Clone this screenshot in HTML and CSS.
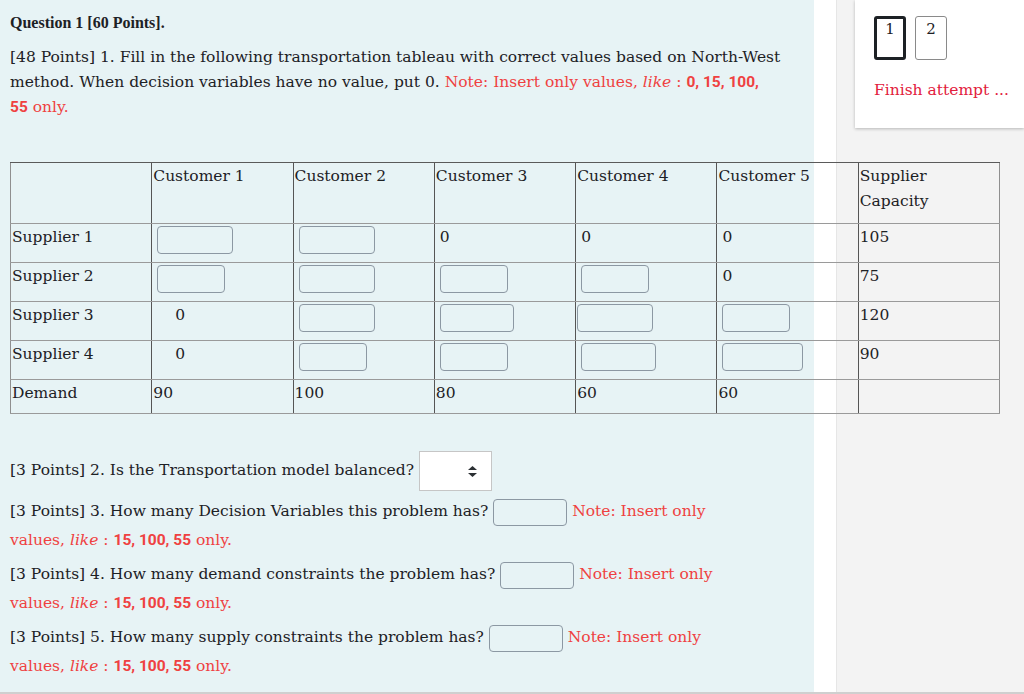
FILE: index.html
```html
<!DOCTYPE html>
<html lang="en">
<head>
    <meta charset="UTF-8">
    <title>Question 1</title>
    <link rel="stylesheet" href="styles.css">
</head>
<body>

    <div class="page">
        <div class="main">
            <h4 class="qtitle">Question 1 [60 Points].</h4>
            <p class="intro">[48 Points] 1. Fill in the following transportation tableau with correct values based on North-West method. When decision variables have no value, put 0. <span class="note">Note: Insert only values, <i>like</i> : <b>0, 15, 100,</b> <span class="nowrap"><b>55</b> only.</span></span></p>

            <table class="tableau">
                <tr>
                    <th></th>
                    <th>Customer 1</th>
                    <th>Customer 2</th>
                    <th>Customer 3</th>
                    <th>Customer 4</th>
                    <th>Customer 5</th>
                    <th>Supplier<br>Capacity</th>
                </tr>
                <tr>
                    <td>Supplier 1</td>
                    <td><input class="cell w76"></td>
                    <td><input class="cell w76"></td>
                    <td><span class="zero">0</span></td>
                    <td><span class="zero">0</span></td>
                    <td><span class="zero">0</span></td>
                    <td>105</td>
                </tr>
                <tr>
                    <td>Supplier 2</td>
                    <td><input class="cell"></td>
                    <td><input class="cell w76"></td>
                    <td><input class="cell"></td>
                    <td><input class="cell"></td>
                    <td><span class="zero">0</span></td>
                    <td>75</td>
                </tr>
                <tr>
                    <td>Supplier 3</td>
                    <td><span class="zero far">0</span></td>
                    <td><input class="cell w76"></td>
                    <td><input class="cell w74"></td>
                    <td><input class="cell w76 tight"></td>
                    <td><input class="cell"></td>
                    <td>120</td>
                </tr>
                <tr>
                    <td>Supplier 4</td>
                    <td><span class="zero far">0</span></td>
                    <td><input class="cell"></td>
                    <td><input class="cell"></td>
                    <td><input class="cell w75"></td>
                    <td><input class="cell w81"></td>
                    <td>90</td>
                </tr>
                <tr class="demand">
                    <td>Demand</td>
                    <td>90</td>
                    <td>100</td>
                    <td>80</td>
                    <td>60</td>
                    <td>60</td>
                    <td></td>
                </tr>
            </table>

            <p class="q q-select">[3 Points] 2. Is the Transportation model balanced?
                <span class="select">
                    <svg width="9" height="11" viewBox="0 0 9 11"><path d="M4.5 0 L9 4 L0 4 Z M4.5 11 L9 7 L0 7 Z" fill="#2b2f33"/></svg>
                </span>
            </p>
            <p class="q">[3 Points] 3. How many Decision Variables this problem has? <input class="answer"> <span class="note">Note: Insert only<br>values, <i>like</i> : <b>15, 100, 55</b> only.</span></p>
            <p class="q">[3 Points] 4. How many demand constraints the problem has? <input class="answer"> <span class="note">Note: Insert only<br>values, <i>like</i> : <b>15, 100, 55</b> only.</span></p>
            <p class="q">[3 Points] 5. How many supply constraints the problem has? <input class="answer"> <span class="note">Note: Insert only<br>values, <i>like</i> : <b>15, 100, 55</b> only.</span></p>
        </div>

        <div class="spacer"></div>

        <div class="aside">
            <div class="card">
                <div class="nav">
                    <span class="navbtn current">1</span>
                    <span class="navbtn">2</span>
                </div>
                <a class="finish" href="#">Finish attempt ...</a>
            </div>
        </div>
    </div>

</body>
</html>
```

FILE: styles.css
```css
body {
    margin: 0;
    font-family: "DejaVu Serif", "Liberation Serif", serif;
    font-size: 15.5px;
    color: #1d2125;
    background: #fff;
}
.page {
    display: flex;
    height: 692px;
    border-bottom: 2px solid #cfcfcf;
}
.main {
    width: 814px;
    box-sizing: border-box;
    padding: 10px 14px 0 10px;
    background: #e7f3f5;
    position: relative;
    z-index: 1;
    line-height: 25px;
}
.spacer {
    width: 22px;
    background: #fff;
}
.aside {
    flex: 1;
    background: #f3f3f3;
    border-left: 1px solid #e6e6e6;
}
.card {
    margin-left: 18px;
    height: 128px;
    box-sizing: border-box;
    padding: 16px 0 0 19px;
    background: #fff;
    box-shadow: 0 1px 3px rgba(0, 0, 0, 0.25);
}
.nav {
    display: flex;
    gap: 9px;
}
.navbtn {
    width: 32px;
    height: 44px;
    box-sizing: border-box;
    border: 1px solid #8a8a8a;
    border-radius: 3px;
    text-align: center;
    font-size: 15px;
    line-height: 22px;
    padding-top: 1px;
}
.navbtn.current {
    border: 3px solid #1d2125;
    padding-top: 0;
    line-height: 20px;
}
.finish {
    display: block;
    margin-top: 20px;
    color: #e2203c;
    text-decoration: none;
    font-size: 15.5px;
    line-height: 20px;
}
.qtitle {
    margin: 0;
    font-family: "Liberation Serif", serif;
    font-size: 16px;
    font-weight: bold;
}
.intro {
    margin: 10px 0 0;
}
.note {
    color: #ef4141;
}
.note b {
    font-family: Roboto, "Liberation Sans", sans-serif;
    font-weight: bold;
}
.nowrap {
    white-space: nowrap;
}
.tableau {
    width: 990px;
    margin-top: 42px;
    table-layout: fixed;
    border-collapse: collapse;
    border: 1px solid #8f8f8f;
}
.tableau th,
.tableau td {
    text-align: left;
    vertical-align: top;
    font-weight: normal;
    border-left: 1px solid #555;
    border-top: 1px solid #5a5a5a;
    border-bottom: 1px solid #9a9a9a;
    padding: 1px 1px 7px;
    line-height: 25px;
}
.tableau th {
    padding-bottom: 9px;
}
.tableau tr > :first-child {
    border-left: 1px solid #8f8f8f;
}
.demand td {
    padding-bottom: 7px;
}
.zero {
    padding-left: 4px;
}
.zero.far {
    padding-left: 22px;
}
input.cell {
    display: block;
    width: 68px;
    height: 28px;
    box-sizing: border-box;
    margin: 1px 0 1px 4px;
    border: 1px solid #8c98a3;
    border-radius: 4px;
    background: transparent;
}
input.w74 { width: 74px; }
input.w75 { width: 75px; }
input.w76 { width: 76px; }
input.w81 { width: 81px; }
input.tight { margin-left: 0; }
.q {
    margin: 0 0 5px;
    line-height: 29px;
}
.q-select {
    margin-top: 36px;
    margin-bottom: 6px;
    line-height: 40px;
}
.select {
    display: inline-flex;
    align-items: center;
    justify-content: flex-end;
    width: 73px;
    height: 40px;
    box-sizing: border-box;
    padding-right: 14px;
    vertical-align: middle;
    background: #fff;
    border: 1px solid #c6c6c6;
}
input.answer {
    width: 74px;
    height: 27px;
    box-sizing: border-box;
    vertical-align: middle;
    border: 1px solid #8c98a3;
    border-radius: 4px;
    background: transparent;
}
```
